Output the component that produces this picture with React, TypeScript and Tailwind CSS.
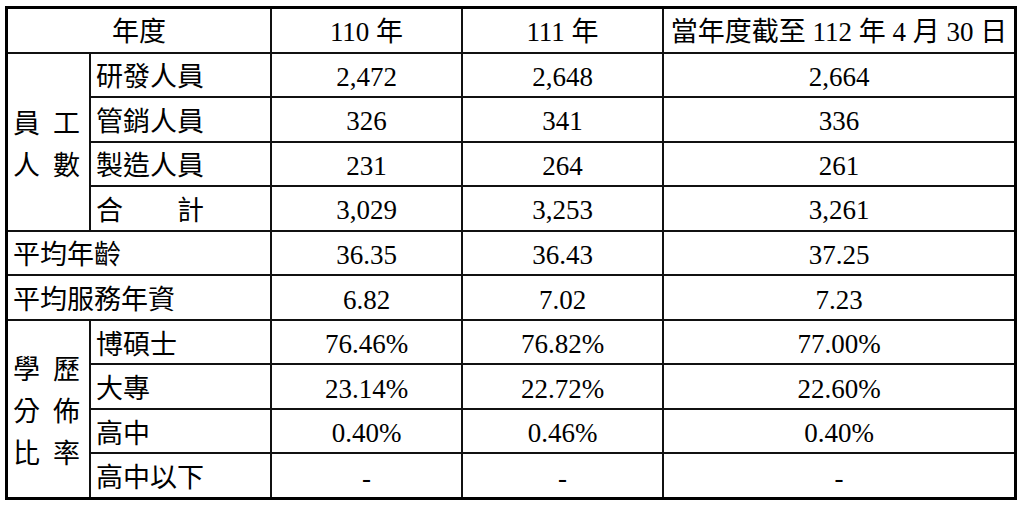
import React from "react";

const years = ["110 年", "111 年", "當年度截至 112 年 4 月 30 日"];

const staff = [
  { label: "研發人員", values: ["2,472", "2,648", "2,664"] },
  { label: "管銷人員", values: ["326", "341", "336"] },
  { label: "製造人員", values: ["231", "264", "261"] },
  { label: "合　　計", values: ["3,029", "3,253", "3,261"] },
];

const edu = [
  { label: "博碩士", values: ["76.46%", "76.82%", "77.00%"] },
  { label: "大專", values: ["23.14%", "22.72%", "22.60%"] },
  { label: "高中", values: ["0.40%", "0.46%", "0.40%"] },
  { label: "高中以下", values: ["-", "-", "-"] },
];

function Cell({ children, className = "" }: { children?: React.ReactNode; className?: string }) {
  return <div className={`bg-white flex items-center min-h-0 ${className}`}>{children}</div>;
}

function ValueCells({ values }: { values: string[] }) {
  return (
    <>
      {values.map((v, i) => (
        <Cell key={i} className="justify-center pt-[5px]">
          {v}
        </Cell>
      ))}
    </>
  );
}

// vertical group label, each line two chars spaced apart
function GroupLabel({ lines, className }: { lines: string[][]; className: string }) {
  return (
    <div
      className={`bg-white col-start-1 flex flex-col pl-[5px] min-h-0 ${className}`}
      style={{ fontFamily: '"Noto Sans CJK TC", sans-serif' }}
    >
      {lines.map((pair, i) => (
        <div key={i} className="flex items-center gap-[13px] h-[42px] shrink-0">
          {pair.map((c) => (
            <span key={c}>{c}</span>
          ))}
        </div>
      ))}
    </div>
  );
}

export default function App() {
  return (
    <div
      className="w-[1024px] h-[508px] bg-white text-black text-[27px] leading-none"
      style={{ fontFamily: '"Liberation Serif", "Noto Sans CJK TC", serif' }}
    >
      <div className="pt-[6px] pl-[5px]">
        <div className="w-[1012px] h-[494px] border-[3px] border-black bg-[#111] grid grid-cols-[81px_179px_189px_199px_350px] grid-rows-[repeat(11,minmax(0,1fr))] gap-[2px]">
          {/* header */}
          <Cell className="col-span-2 justify-center pt-[4px]">年度</Cell>
          {years.map((y) => (
            <Cell key={y} className="justify-center pt-[4px]">
              {y}
            </Cell>
          ))}

          {/* staff counts */}
          <GroupLabel
            className="row-start-2 row-span-4 pt-[47px]"
            lines={[
              ["員", "工"],
              ["人", "數"],
            ]}
          />
          {staff.map((r, i) => (
            <React.Fragment key={r.label}>
              <Cell className={`col-start-2 pl-[5px] pt-[6px] ${["row-start-2", "row-start-3", "row-start-4", "row-start-5"][i]}`}>
                {r.label}
              </Cell>
              <ValueCells values={r.values} />
            </React.Fragment>
          ))}

          <Cell className="col-span-2 pl-[5px] pt-[6px]">平均年齡</Cell>
          <ValueCells values={["36.35", "36.43", "37.25"]} />

          <Cell className="col-span-2 pl-[5px] pt-[6px]">平均服務年資</Cell>
          <ValueCells values={["6.82", "7.02", "7.23"]} />

          {/* education */}
          <GroupLabel
            className="row-start-8 row-span-4 pt-[26px]"
            lines={[
              ["學", "歷"],
              ["分", "佈"],
              ["比", "率"],
            ]}
          />
          {edu.map((r, i) => (
            <React.Fragment key={r.label}>
              <Cell className={`col-start-2 pl-[5px] pt-[6px] ${["row-start-8", "row-start-9", "row-start-10", "row-start-11"][i]}`}>
                {r.label}
              </Cell>
              <ValueCells values={r.values} />
            </React.Fragment>
          ))}
        </div>
      </div>
    </div>
  );
}
